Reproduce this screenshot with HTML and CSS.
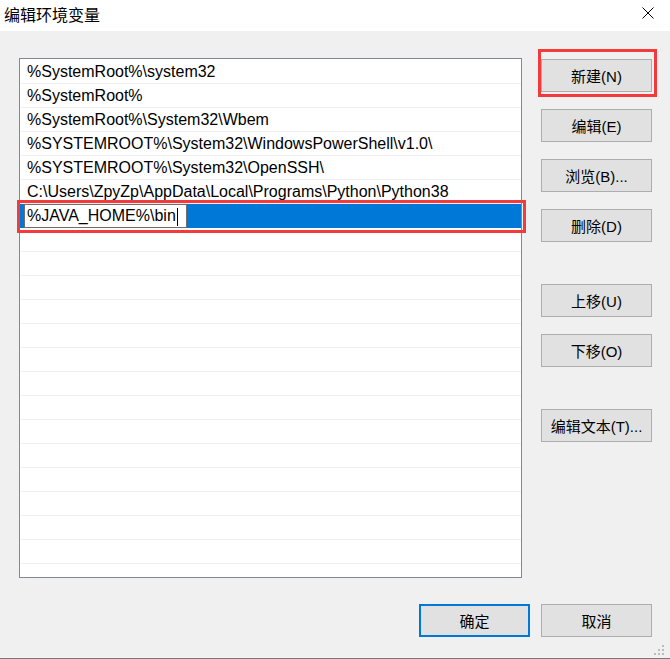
FILE: index.html
```html
<!DOCTYPE html>
<html lang="zh-CN">
<head>
    <meta charset="utf-8">
    <meta name="viewport" content="width=device-width, initial-scale=1.0">
    <title>编辑环境变量</title>
    <link rel="stylesheet" href="styles.css">
</head>
<body>

<div class="window">
    <header class="titlebar">
        <span class="title">编辑环境变量</span>
        <svg class="close" width="12" height="12" viewBox="0 0 12 12">
            <path d="M0.5 0.5 L11.5 11.5 M11.5 0.5 L0.5 11.5" stroke="#000" stroke-width="1" fill="none"/>
        </svg>
    </header>

    <main class="main">
        <section class="list">
            <div class="row">%SystemRoot%\system32</div>
            <div class="row">%SystemRoot%</div>
            <div class="row">%SystemRoot%\System32\Wbem</div>
            <div class="row">%SYSTEMROOT%\System32\WindowsPowerShell\v1.0\</div>
            <div class="row">%SYSTEMROOT%\System32\OpenSSH\</div>
            <div class="row">C:\Users\ZpyZp\AppData\Local\Programs\Python\Python38</div>
            <div class="row selected"><span class="field">%JAVA_HOME%\bin<i class="caret"></i></span></div>
            <div class="row"></div>
            <div class="row"></div>
            <div class="row"></div>
            <div class="row"></div>
            <div class="row"></div>
            <div class="row"></div>
            <div class="row"></div>
            <div class="row"></div>
            <div class="row"></div>
            <div class="row"></div>
            <div class="row"></div>
            <div class="row"></div>
            <div class="row"></div>
            <div class="row"></div>
        </section>

        <nav class="buttons">
            <button class="btn new">新建(N)</button>
            <button class="btn">编辑(E)</button>
            <button class="btn">浏览(B)...</button>
            <button class="btn">删除(D)</button>
            <button class="btn spaced">上移(U)</button>
            <button class="btn">下移(O)</button>
            <button class="btn spaced">编辑文本(T)...</button>
        </nav>
    </main>

    <footer class="bottom">
        <button class="btn ok">确定</button>
        <button class="btn">取消</button>
    </footer>

    <!-- resize grip -->
    <svg class="grip" width="12" height="12" viewBox="0 0 12 12">
        <rect x="8" y="1" width="2" height="2"/>
        <rect x="4" y="5" width="2" height="2"/>
        <rect x="8" y="5" width="2" height="2"/>
        <rect x="0" y="9" width="2" height="2"/>
        <rect x="4" y="9" width="2" height="2"/>
        <rect x="8" y="9" width="2" height="2"/>
    </svg>
</div>

</body>
</html>
```

FILE: styles.css
```css
* {
    box-sizing: border-box;
}

body {
    margin: 0;
    font-family: "Liberation Sans", "Noto Sans CJK SC", sans-serif;
    color: #000;
}

.window {
    width: 670px;
    height: 659px;
    background: #f0f0f0;
    border-bottom: 1px solid #7a7a7a;
    position: relative;
    overflow: hidden;
}

.titlebar {
    height: 31px;
    background: #fff;
    display: flex;
    justify-content: space-between;
    align-items: center;
    padding: 0 16px 0 4px;
}

.title {
    font-size: 16px;
    line-height: 16px;
}

.close {
    align-self: flex-start;
    margin-top: 7px;
}

.main {
    display: flex;
    padding: 27px 0 0 19px;
}

.list {
    width: 503px;
    height: 520px;
    border: 1px solid #828790;
    background: #fff;
    padding-top: 1px;
}

.row {
    height: 24px;
    border-bottom: 1px solid #f0f0f0;
    padding-left: 7px;
    font-size: 16px;
    line-height: 23px;
    white-space: nowrap;
}

.row.selected {
    background: #0078d7;
    border-bottom-color: #0078d7;
    padding-left: 4px;
    position: relative;
}

.row.selected::after {
    content: "";
    position: absolute;
    top: -4px;
    left: -3px;
    right: -5px;
    bottom: -6px;
    border: 3px solid #f43b3b;
}

.field {
    display: inline-block;
    vertical-align: top;
    width: 163px;
    height: 24px;
    border: 1px solid #6e6e6e;
    background: #fff;
    padding-left: 2px;
    line-height: 22px;
}

.caret {
    display: inline-block;
    width: 1px;
    height: 18px;
    background: #000;
    vertical-align: middle;
    margin-left: 1px;
}

.buttons {
    display: flex;
    flex-direction: column;
    margin-left: 19px;
    padding-top: 1px;
}

.btn {
    width: 111px;
    height: 33px;
    margin: 0 0 17px 0;
    padding: 0;
    border: 1px solid #adadad;
    background: #e1e1e1;
    font-family: "Liberation Sans", "Noto Sans CJK SC", sans-serif;
    font-size: 15px;
    color: #000;
}

.btn.spaced {
    margin-top: 25px;
}

.btn.new {
    position: relative;
}

.btn.new::after {
    content: "";
    position: absolute;
    top: -11px;
    left: -4px;
    right: -6px;
    bottom: -6px;
    border: 3px solid #f43b3b;
}

.bottom {
    display: flex;
    justify-content: flex-end;
    gap: 11px;
    padding-right: 18px;
    margin-top: 26px;
}

.bottom .btn {
    margin: 0;
}

.btn.ok {
    border: 2px solid #0078d7;
}

.grip {
    position: absolute;
    left: 654px;
    top: 644px;
    fill: #bcbcbc;
}
```
